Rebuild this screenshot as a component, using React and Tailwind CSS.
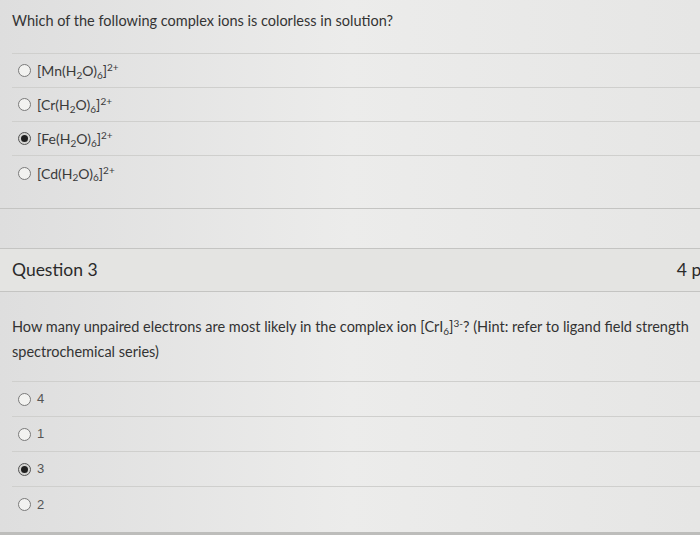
import React from 'react';

const Radio = ({ checked }) => (
  <span
    className={`flex h-[13px] w-[13px] shrink-0 items-center justify-center rounded-full border ${
      checked ? 'border-[#555] bg-[#d4d4d2]' : 'border-[#7a7a7a] bg-[#f2f2f0]'
    }`}
  >
    {checked && <span className="h-[7px] w-[7px] rounded-full bg-[#1f1f1f]" />}
  </span>
);

const Ion = ({ metal, sup }) => (
  <span>
    [{metal}(H<sub className="text-[10px] leading-none">2</sub>O)
    <sub className="text-[10px] leading-none">6</sub>]
    <sup className="text-[10px] leading-none">{sup}</sup>
  </span>
);

const Option = ({ checked, children, last, num, tall }) => (
  <div
    className={`flex items-center gap-[6px] pl-[6px] ${tall ? 'h-[35px]' : 'h-[34px]'} ${
      last ? '' : 'border-b border-[#cfcfcd]'
    }`}
  >
    <Radio checked={checked} />
    <span
      className={
        num
          ? "font-['Liberation_Sans',sans-serif] text-[13px] text-[#555]"
          : 'text-[14px] text-[#3a3a3a]'
      }
    >
      {children}
    </span>
  </div>
);

export default function App() {
  const ions = [
    { metal: 'Mn', sup: '2+' },
    { metal: 'Cr', sup: '2+' },
    { metal: 'Fe', sup: '2+', checked: true },
    { metal: 'Cd', sup: '2+' },
  ];
  const nums = [
    { v: '4' },
    { v: '1' },
    { v: '3', checked: true },
    { v: '2' },
  ];

  return (
    <div className="h-[535px] w-[700px] overflow-hidden bg-linear-to-r from-[#dedede] via-[#ececeb] to-[#e6e6e5] font-['Lato',sans-serif] text-[#333]">
      <div className="pl-[12px]">
        <p className="pt-[11px] text-[14.5px] leading-[20px] text-[#343434]">
          Which of the following complex ions is colorless in solution?
        </p>
        <div className="mt-[22px] border-t border-[#cfcfcd]">
          {ions.map((o, i) => (
            <Option key={o.metal} checked={o.checked} last={i === ions.length - 1}>
              <Ion metal={o.metal} sup={o.sup} />
            </Option>
          ))}
        </div>
      </div>

      <div className="mt-[18px] border-t border-[#c4c4c2]" />
      <div className="mt-[39px] flex h-[44px] items-center justify-between border-y border-[#c4c4c2] bg-[#e4e4e2] pl-[12px]">
        <span className="text-[17.5px] text-[#2a2a2a]">Question 3</span>
        <span className="mr-[-15px] text-[17.5px] text-[#2a2a2a]">4 pts</span>
      </div>

      <div className="pl-[12px]">
        <p className="pt-[22px] text-[14.5px] leading-[25px] text-[#333]">
          How many unpaired electrons are most likely in the complex ion [CrI
          <sub className="text-[10px] leading-none">6</sub>]
          <sup className="text-[10px] leading-none">3-</sup>? (Hint: refer to ligand field strength
          spectrochemical series)
        </p>
        <div className="mt-[17px] border-t border-[#cfcfcd]">
          {nums.map((o, i) => (
            <Option key={o.v} num tall checked={o.checked} last={i === nums.length - 1}>
              {o.v}
            </Option>
          ))}
        </div>
      </div>
      <div className="mt-[10px] h-[10px] bg-[#bdbdbb]" />
    </div>
  );
}
